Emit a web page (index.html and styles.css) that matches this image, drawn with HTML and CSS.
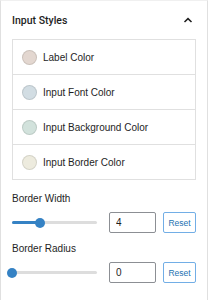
FILE: index.html
```html
<!DOCTYPE html>
<html lang="en">
<head>
  <meta charset="UTF-8" />
  <meta name="viewport" content="width=device-width, initial-scale=1.0"/>
  <title>Input Styles</title>
  <link rel="stylesheet" href="styles.css">
</head>
<body>
  <div class="panel">
    <div class="panel-header">
      <h2>Input Styles</h2>
      <svg class="chevron" width="10" height="6" viewBox="0 0 10 6">
        <path d="M1.5 5 L5 1.6 L8.5 5" fill="none" stroke="#1e1e1e" stroke-width="1.5"/>
      </svg>
    </div>

    <div class="color-list">
      <div class="color-row">
        <span class="swatch label-color"></span>
        <span>Label Color</span>
      </div>
      <div class="color-row">
        <span class="swatch font-color"></span>
        <span>Input Font Color</span>
      </div>
      <div class="color-row">
        <span class="swatch bg-color"></span>
        <span>Input Background Color</span>
      </div>
      <div class="color-row">
        <span class="swatch border-color"></span>
        <span>Input Border Color</span>
      </div>
    </div>

    <div class="control">
      <label>Border Width</label>
      <div class="control-row">
        <div class="slider">
          <div class="fill" style="width: 28px"></div>
          <div class="thumb" style="left: 28px"></div>
        </div>
        <input class="num" type="text" value="4">
        <button class="reset">Reset</button>
      </div>
    </div>

    <div class="control">
      <label>Border Radius</label>
      <div class="control-row">
        <div class="slider">
          <div class="fill" style="width: 0px"></div>
          <div class="thumb" style="left: 0px"></div>
        </div>
        <input class="num" type="text" value="0">
        <button class="reset">Reset</button>
      </div>
    </div>
  </div>
</body>
</html>
```

FILE: styles.css
```css
* {
  box-sizing: border-box;
  margin: 0;
  padding: 0;
  font-family: 'Liberation Sans', Arial, sans-serif;
}

body {
  background: #fff;
  color: #1e1e1e;
}

.panel {
  width: 208px;
  height: 300px;
  border: 1px solid #e0e0e0;
  border-top-color: #f0f0f0;
  border-bottom: none;
  padding: 0 11px;
}

.panel-header {
  height: 38px;
  display: flex;
  align-items: center;
  justify-content: space-between;
  padding-right: 3px;
}

.panel-header h2 {
  font-family: Roboto, 'Liberation Sans', sans-serif;
  font-size: 10.5px;
  font-weight: 500;
  color: #1e1e1e;
}

.chevron {
  display: block;
}

.color-list {
  width: 184px;
  border: 1px solid #e0e0e0;
}

.color-row {
  height: 35px;
  display: flex;
  align-items: center;
  gap: 6px;
  padding-left: 9px;
  font-size: 10px;
  color: #1e1e1e;
  border-bottom: 1px solid #e0e0e0;
}

.color-row:last-child {
  height: 34px;
  border-bottom: none;
}

.swatch {
  width: 15px;
  height: 15px;
  border-radius: 50%;
  border: 1px solid rgba(0, 0, 0, 0.1);
}

.label-color { background: #e3d7d0; }
.font-color { background: #d2dde3; }
.bg-color { background: #d2e2dc; }
.border-color { background: #edebde; }

.control {
  margin-top: 11px;
}

.control + .control {
  margin-top: 8px;
}

.control label {
  display: block;
  font-size: 10px;
  line-height: 16px;
  color: #1e1e1e;
}

.control-row {
  display: flex;
  align-items: center;
  margin-top: 5px;
  height: 21px;
}

.slider {
  position: relative;
  width: 85px;
  height: 3px;
  background: #dddddd;
  border-radius: 2px;
  margin-right: 12px;
}

.slider .fill {
  height: 3px;
  background: #3582c4;
  border-radius: 2px;
}

.slider .thumb {
  position: absolute;
  top: 50%;
  width: 10px;
  height: 10px;
  border-radius: 50%;
  background: #3582c4;
  transform: translate(-50%, -50%);
}

.num {
  width: 47px;
  height: 21px;
  border: 1px solid #8c8f94;
  border-radius: 2px;
  padding-left: 6px;
  font-size: 10px;
  color: #1e1e1e;
  outline: none;
}

.reset {
  margin-left: 7px;
  width: 33px;
  height: 21px;
  border: 1px solid #72aee6;
  border-radius: 2px;
  background: #fff;
  color: #2271b1;
  font-size: 8.5px;
}
```
